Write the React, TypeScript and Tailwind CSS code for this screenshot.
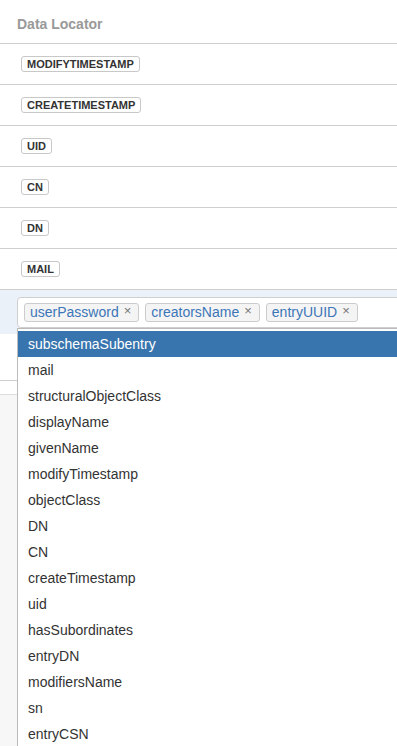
import React from 'react';

const locators = ['MODIFYTIMESTAMP', 'CREATETIMESTAMP', 'UID', 'CN', 'DN', 'MAIL'];

const chips = ['userPassword', 'creatorsName', 'entryUUID'];

const options = [
  'subschemaSubentry',
  'mail',
  'structuralObjectClass',
  'displayName',
  'givenName',
  'modifyTimestamp',
  'objectClass',
  'DN',
  'CN',
  'createTimestamp',
  'uid',
  'hasSubordinates',
  'entryDN',
  'modifiersName',
  'sn',
  'entryCSN',
];

const App: React.FC = () => {
  return (
    <div
      className="h-screen w-full overflow-hidden flex flex-col bg-[#f7f7f7] text-[#333]"
      style={{ fontFamily: '"Liberation Sans", Arial, sans-serif' }}
    >
      <div className="bg-white">
        <div className="h-[44px] flex items-center px-[17px] border-b border-[#cfcfcf]">
          <span className="text-[14px] font-bold text-[#999] pt-[6px]">Data Locator</span>
        </div>
        {locators.map((name) => (
          <div key={name} className="h-[41px] flex items-center pl-[21px] border-b border-[#cfcfcf]">
            <span className="border border-[#c8c8c8] rounded-[3px] px-[5px] h-[16px] leading-[14px] text-[11px] font-bold text-[#333] bg-white">
              {name}
            </span>
          </div>
        ))}
      </div>

      <div className="relative bg-[#ebf1f9] pt-[7px] pb-[6px] pl-[17px]">
        <div className="w-[420px] h-[31px] bg-white border border-[#cfcfcf] rounded-[4px] flex items-center gap-[6px] pl-[6px]">
          {chips.map((c) => (
            <span
              key={c}
              className="h-[19px] flex items-center bg-[#f4f4f4] border border-[#cccccc] rounded-[3px] pl-[5px] pr-[7px] text-[14px] text-[#3c76b8]"
            >
              {c}
              <span className="ml-[5px] text-[13px] leading-none text-[#777] -mt-[5px]">×</span>
            </span>
          ))}
        </div>

        <div className="absolute left-[17px] top-[38px] w-[420px] z-10 bg-white border border-[#bbbbbb] pt-[2px]">
          {options.map((o, i) => (
            <div
              key={o}
              className={
                i === 0
                  ? 'h-[26px] flex items-center pl-[10px] text-[14px] bg-[#3875ae] text-white'
                  : 'h-[26px] flex items-center pl-[10px] text-[14px] text-[#333]'
              }
            >
              {o}
            </div>
          ))}
        </div>
      </div>

      <div className="bg-white">
        <div className="h-[47px] border-b border-[#cfcfcf]" />
        <div className="h-[14px] border-b border-[#dcdcdc]" />
      </div>
      <div className="flex-1" />
    </div>
  );
};

export default App;
